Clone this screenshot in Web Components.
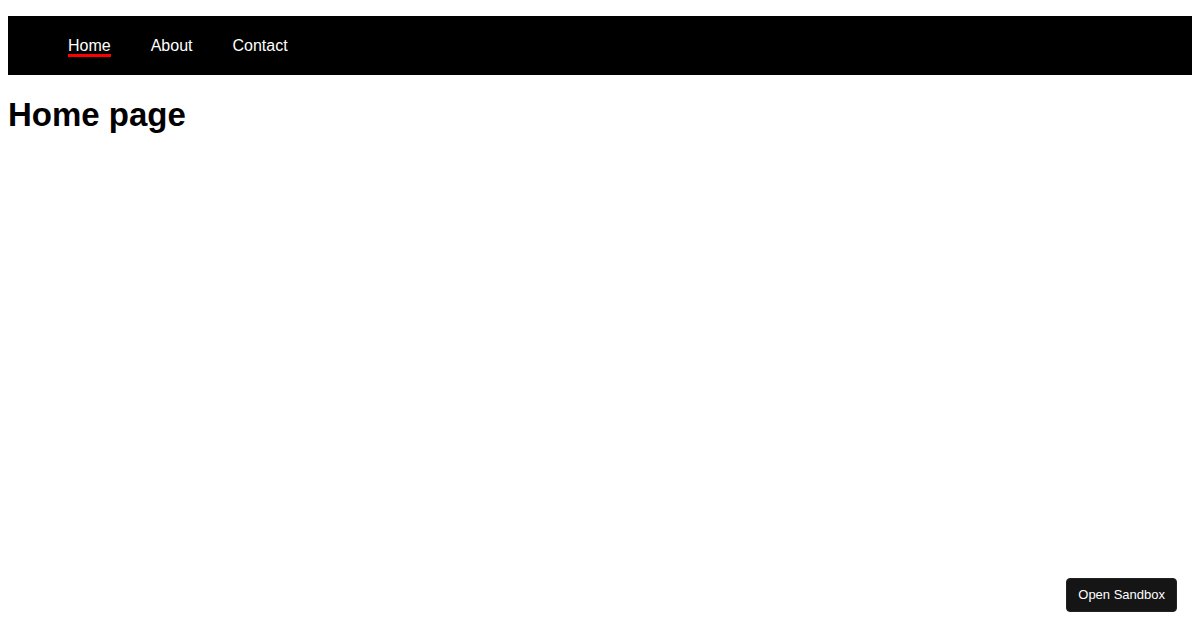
<!DOCTYPE html>
<html lang="en">
<head>
  <meta charset="UTF-8">
  <meta name="viewport" content="width=device-width, initial-scale=1.0">
  <title>Home page</title>
  <style>
    body {
      margin: 16px 8px;
      font-family: "Liberation Sans", Arial, sans-serif;
      background: #fff;
      color: #000;
    }
  </style>
</head>
<body>
  <nav-bar>
    <nav-item href="#home" active>Home</nav-item>
    <nav-item href="#about">About</nav-item>
    <nav-item href="#contact">Contact</nav-item>
  </nav-bar>
  <page-view>Home page</page-view>
  <sandbox-button>Open Sandbox</sandbox-button>

  <script>
    class NavBar extends HTMLElement {
      constructor() {
        super();
        this.attachShadow({ mode: 'open' });
      }

      connectedCallback() {
        this.shadowRoot.innerHTML = `
          <style>
            :host {
              display: block;
              background: #000;
            }

            nav {
              display: flex;
              gap: 40px;
              padding: 20px 60px;
            }
          </style>
          <nav><slot></slot></nav>
        `;
      }
    }

    class NavItem extends HTMLElement {
      constructor() {
        super();
        this.attachShadow({ mode: 'open' });
      }

      connectedCallback() {
        const href = this.getAttribute('href') || '#';
        const active = this.hasAttribute('active');

        this.shadowRoot.innerHTML = `
          <style>
            :host {
              display: block;
              line-height: 19px;
            }

            a {
              color: #fff;
              text-decoration: none;
            }

            a.active {
              border-bottom: 3px solid red;
            }
          </style>
          <a href="${href}" ${active ? 'class="active" aria-current="page"' : ''}><slot></slot></a>
        `;
      }
    }

    class PageView extends HTMLElement {
      constructor() {
        super();
        this.attachShadow({ mode: 'open' });
      }

      connectedCallback() {
        this.shadowRoot.innerHTML = `
          <style>
            :host {
              display: block;
            }

            h1 {
              margin: 21px 0;
              font-size: 33px;
              line-height: 38px;
            }
          </style>
          <main><h1><slot></slot></h1></main>
        `;
      }
    }

    class SandboxButton extends HTMLElement {
      constructor() {
        super();
        this.attachShadow({ mode: 'open' });
      }

      connectedCallback() {
        this.shadowRoot.innerHTML = `
          <style>
            /* Floats over the page in the bottom corner */
            :host {
              display: block;
              position: fixed;
              right: 23px;
              bottom: 18px;
            }

            button {
              display: block;
              padding: 8px 11px;
              border: 1px solid #222;
              border-radius: 4px;
              background: #151515;
              color: #fff;
              font-family: inherit;
              font-size: 13px;
              line-height: 16px;
              cursor: pointer;
            }
          </style>
          <button type="button"><slot></slot></button>
        `;
      }
    }

    customElements.define('nav-bar', NavBar);
    customElements.define('nav-item', NavItem);
    customElements.define('page-view', PageView);
    customElements.define('sandbox-button', SandboxButton);
  </script>
</body>
</html>
